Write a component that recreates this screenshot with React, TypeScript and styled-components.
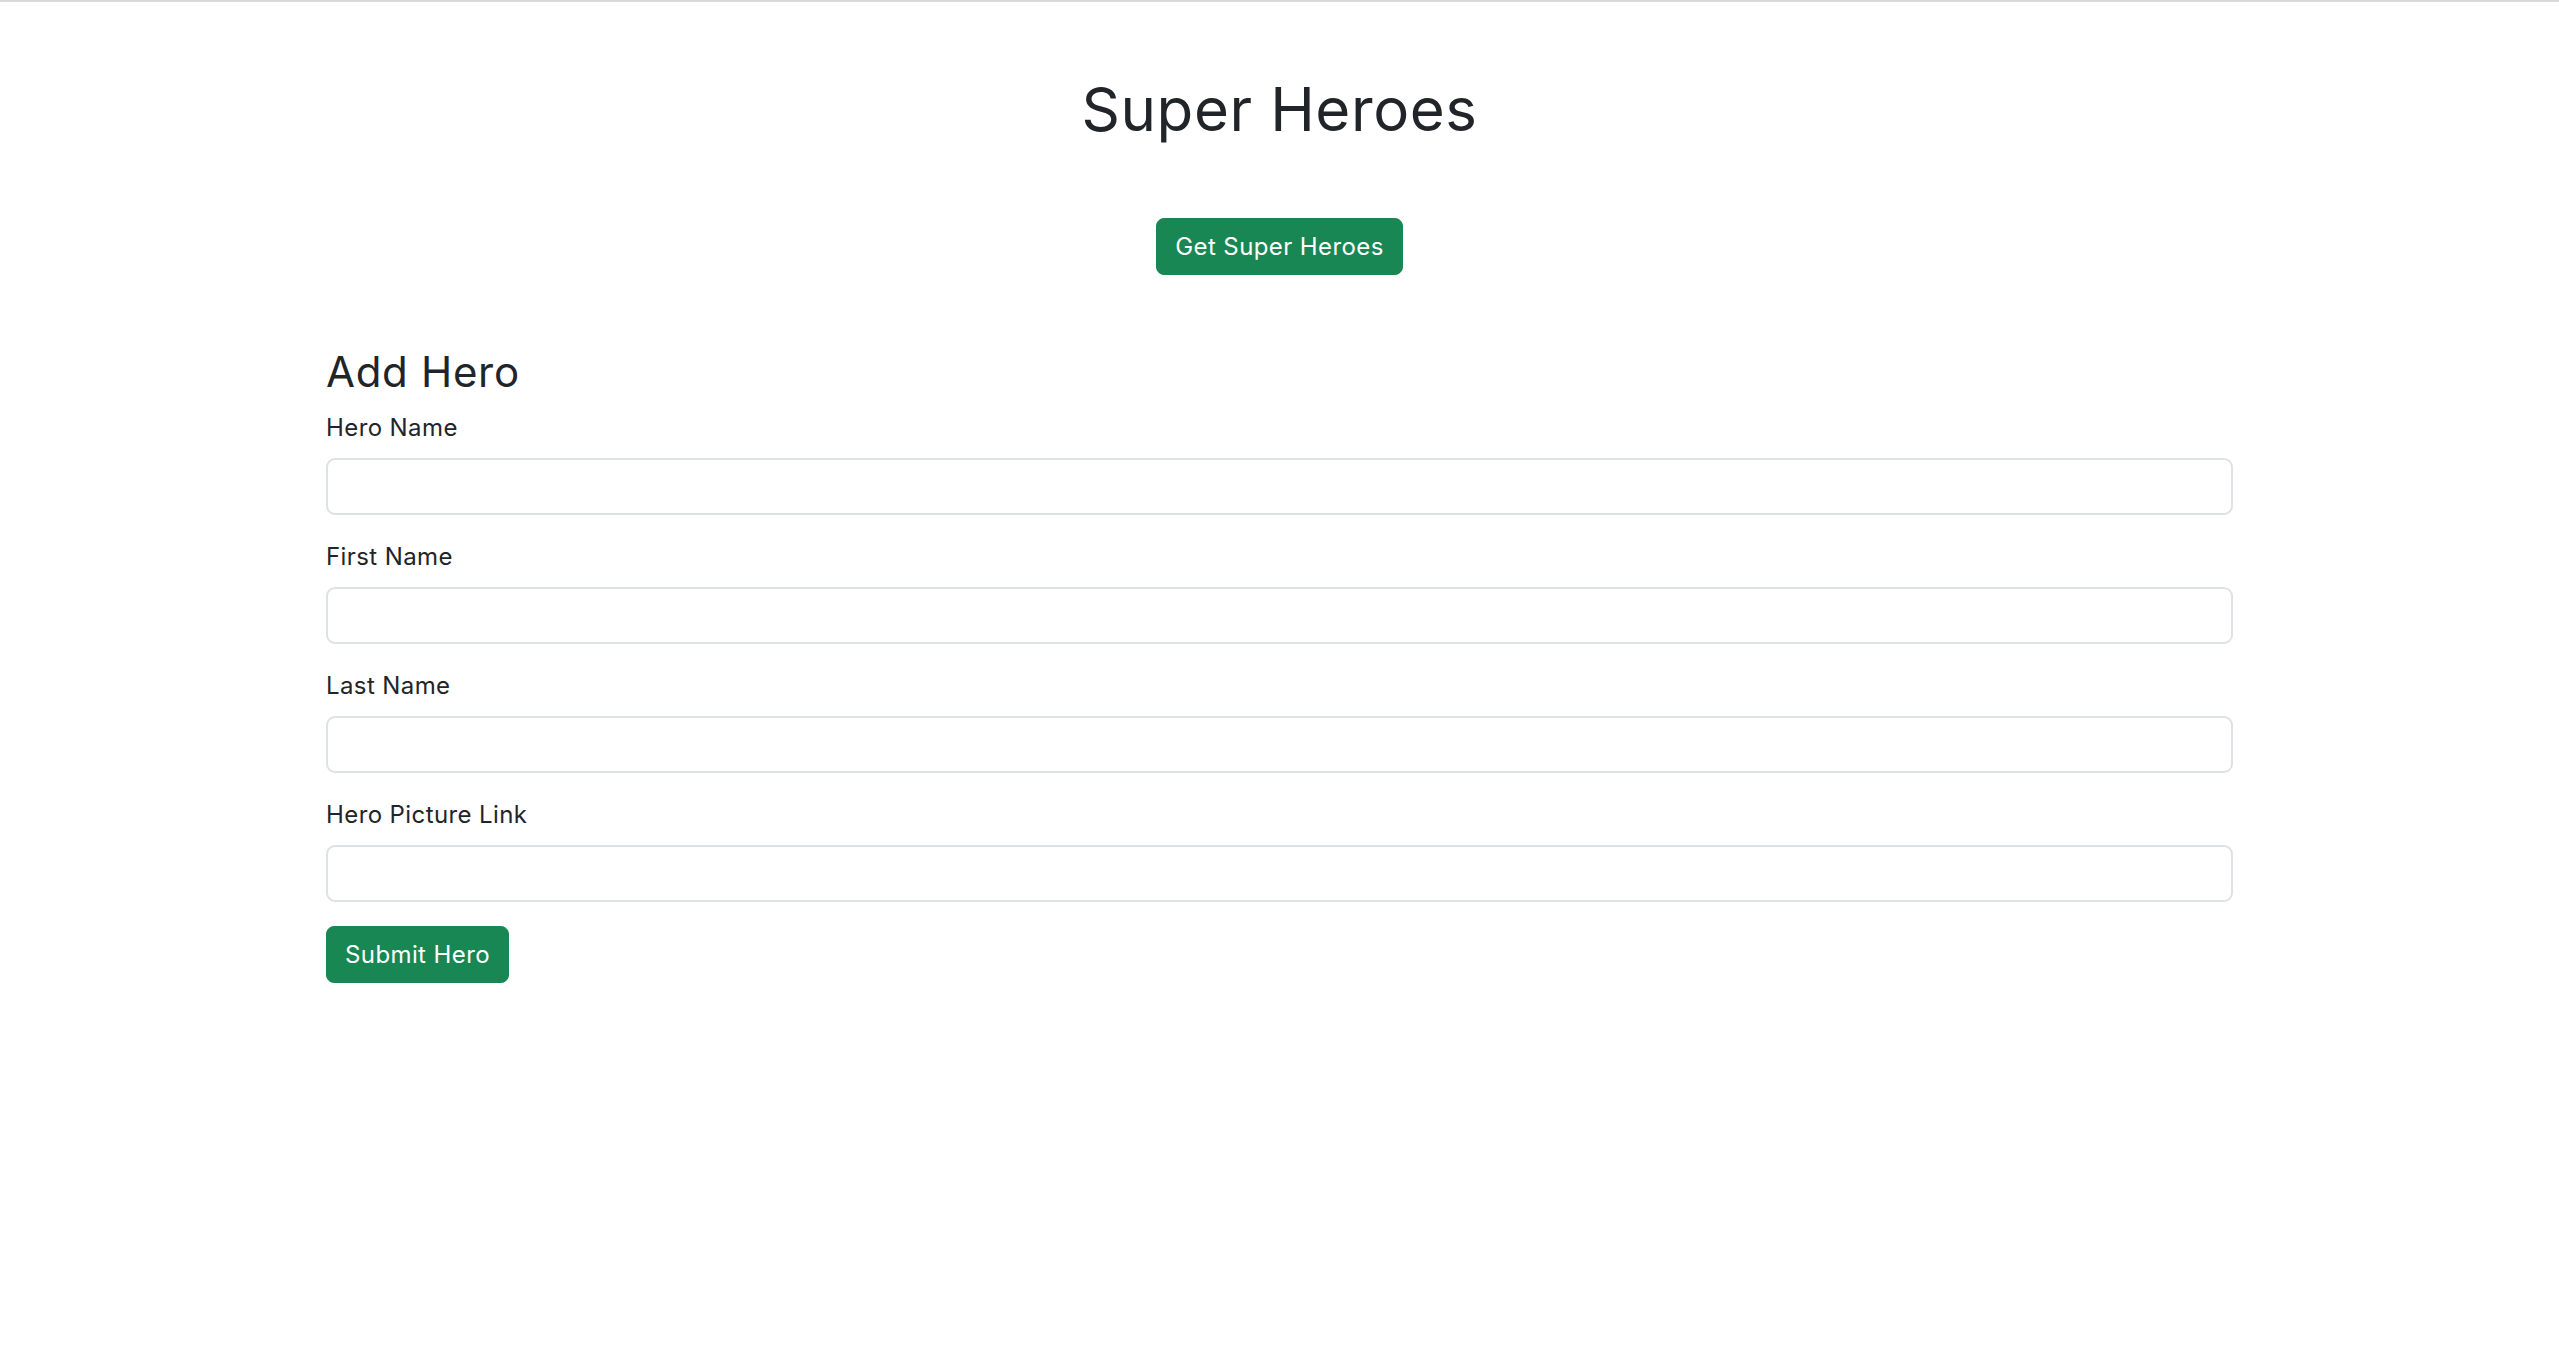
import React, { useState } from 'react';
import styled, { createGlobalStyle } from 'styled-components';

const GlobalStyle = createGlobalStyle`
  * {
    box-sizing: border-box;
  }
  body {
    margin: 0;
    background: #ffffff;
    color: #212529;
    font-family: Inter, 'Noto Sans', sans-serif;
  }
`;

const Page = styled.div`
  min-height: 100vh;
  border-top: 2px solid #dadada;
  display: flex;
  flex-direction: column;
  align-items: center;
  padding-top: 71px;
`;

const Title = styled.h1`
  margin: 0 0 73px;
  font-size: 60px;
  font-weight: 400;
  line-height: 72px;
  letter-spacing: 0.6px;
`;

const Button = styled.button`
  display: inline-flex;
  align-items: center;
  justify-content: center;
  height: 57px;
  padding: 0 18px;
  border: 1px solid #198754;
  border-radius: 8px;
  background: #198754;
  color: #ffffff;
  font-family: inherit;
  font-size: 24px;
  font-weight: 400;
  letter-spacing: 0.4px;
  cursor: pointer;
`;

const Form = styled.form`
  width: 1907px;
  margin-top: 72px;
  display: flex;
  flex-direction: column;
  align-items: flex-start;
`;

const FormTitle = styled.h3`
  margin: 0 0 13px;
  font-size: 42px;
  font-weight: 400;
  line-height: 50px;
  letter-spacing: 0.7px;
`;

const Field = styled.div`
  width: 100%;
  margin-bottom: 24px;
`;

const Label = styled.label`
  display: block;
  margin-bottom: 12px;
  font-size: 24px;
  line-height: 36px;
  letter-spacing: 0.4px;
`;

const Input = styled.input`
  display: block;
  width: 100%;
  height: 57px;
  padding: 9px 18px;
  border: 2px solid #dee2e6;
  border-radius: 9px;
  font-family: inherit;
  font-size: 24px;
  color: #212529;
  outline: none;
`;

const fields = [
  { key: 'name', label: 'Hero Name' },
  { key: 'firstName', label: 'First Name' },
  { key: 'lastName', label: 'Last Name' },
  { key: 'imgUrl', label: 'Hero Picture Link' },
];

export default function App() {
  const [values, setValues] = useState<Record<string, string>>({});

  return (
    <>
      <GlobalStyle />
      <Page>
        <Title>Super Heroes</Title>
        <Button type="button">Get Super Heroes</Button>

        <Form onSubmit={(e) => e.preventDefault()}>
          <FormTitle>Add Hero</FormTitle>
          {fields.map((f) => (
            <Field key={f.key}>
              <Label htmlFor={f.key}>{f.label}</Label>
              <Input
                id={f.key}
                value={values[f.key] || ''}
                onChange={(e) => setValues({ ...values, [f.key]: e.target.value })}
              />
            </Field>
          ))}
          <Button type="submit">Submit Hero</Button>
        </Form>
      </Page>
    </>
  );
}
